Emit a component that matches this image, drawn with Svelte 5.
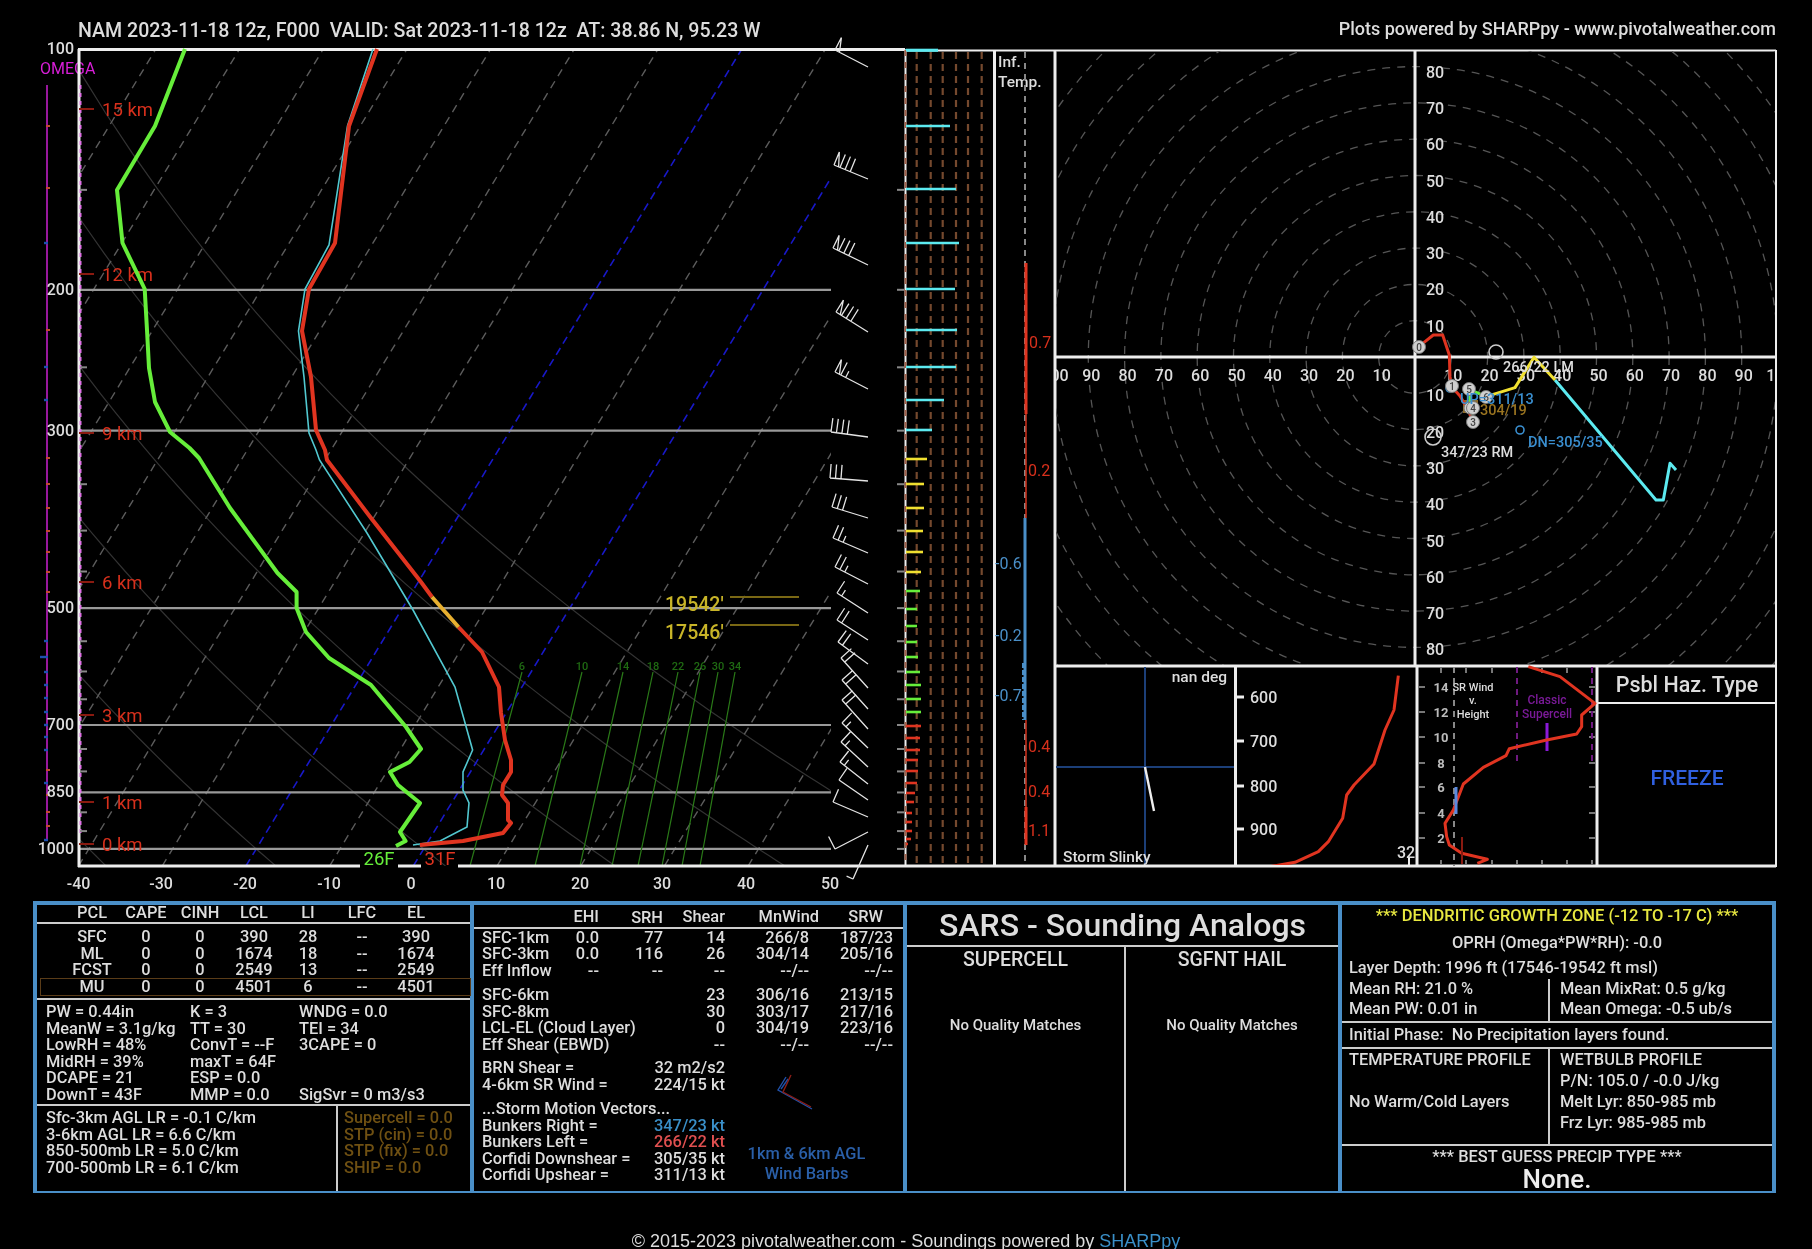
<script lang="ts">
  // pressure axis of the skew-T, fitted on the 100 and 1000 mb lines
  const py = (p) => 49 + 347.4 * Math.log(p / 100);
  const tx = (t, y) => 78.5 + 8.37 * (t + 40) + 0.607 * (866 - y);

  const toPath = (pts) => 'M' + pts.map((p) => p.join(' ')).join('L');
  const zoomed = (pts, ox, oy, sx = 3, sy = 3) => pts.map(([x, y]) => [ox + x / sx, oy + y / sy]);

  const isoTemps = [];
  for (let t = -110; t <= 40; t += 10) isoTemps.push(t);

  function adiabat(thetaC) {
    const pts = [];
    for (let p = 90; p <= 1060; p += 15) {
      const y = py(p);
      const t = (thetaC + 273.15) * Math.pow(p / 1000, 0.286) - 273.15;
      pts.push([tx(t, y).toFixed(1), y.toFixed(1)]);
    }
    return toPath(pts);
  }
  const adiabats = [-40, -20, 0, 20, 40, 60].map(adiabat);

  const isobars = [200, 300, 500, 700, 850, 1000];
  const pLabels = [100, 200, 300, 500, 700, 850, 1000];
  const minor = [150, 250, 350, 400, 450, 550, 600, 650, 750, 800, 900, 950];
  const heights = [
    ['15 km', 109], ['12 km', 274], ['9 km', 433], ['6 km', 582], ['3 km', 715], ['1 km', 802], ['0 km', 844]
  ];
  const xLabels = [[-40, 78.5], [-30, 161], [-20, 245], [-10, 329], [0, 411], [10, 496], [20, 580], [30, 662], [40, 746], [50, 830]];

  const mixing = [
    [6, 522, 470], [10, 582, 535], [14, 623, 580], [18, 653, 612],
    [22, 678, 638], [26, 700, 662], [30, 718, 682], [34, 735, 700]
  ];

  const tempA = [[377,49],[349,126],[335,243],[309,289],[302,331],[311,377],[316,430],[325,450],[327,460],[371,518],[421,582],[432,597]];
  const tempB = [[458.5,627],[482,652],[499,687],[501,713],[505,740],[511,760],[511,772],[503,785],[502,795],[508,803],[508,820],[511,823],[503,833],[463,841],[420,845]];
  const wetbulb = [[373,49],[347.5,126],[329,245],[305,289],[298.5,331],[304,377],[309,433],[316,450],[319.5,460],[367,533],[413,610],[455,687],[472.6,750],[463,772],[463,790],[469,803],[467,827],[440,841],[413,845]];
  const dew = [[185,49],[155,126],[117,190],[122.5,243],[144.7,289],[147,330],[149,368],[155,402],[170,432],[189.5,448],[199,458],[230,508],[277.5,573],[296.6,592],[296.6,608],[306,632],[329,658],[371,685],[406,727],[421,749],[409.5,762],[390,772],[398,785],[420,803],[400,832],[405.6,841],[396,846]];

  const omegaRed = [126,188,330,458,484,508,531,552,572,592,770,795,812,826];
  const omegaBlue = [243,367,400,641,657,672,685,698,712,725,737,750,783,840];

  function barb(tipX, tipY, tailY, count, flags) {
    const tailX = 868;
    const len = Math.hypot(tailX - tipX, tailY - tipY);
    const ux = (tailX - tipX) / len, uy = (tailY - tipY) / len;
    const nx = uy, ny = -ux;
    let d = `M${tailX} ${tailY}L${tipX} ${tipY}`;
    let s = 0;
    const at = (v) => [tipX + ux * v, tipY + uy * v];
    for (let i = 0; i < flags; i++) {
      const [ax, ay] = at(s), [bx, by] = at(s + 5);
      d += `M${ax} ${ay}L${ax + nx * 14} ${ay + ny * 14}L${bx} ${by}`;
      s += 6.5;
    }
    let left = count;
    while (left > 0) {
      const l = left >= 1 ? 14 : 7;
      const [ax, ay] = at(s);
      d += `M${ax} ${ay}l${nx * l} ${ny * l}`;
      left -= 1;
      s += 5.5;
    }
    return d;
  }
  const barbs = [
    [835,50,67,0,1],[834,165,179,3,1],[833,248,265,3,1],[836,312,332,3,1],[835,372,389,1.5,1],
    [831,432,437,4,0],[830,478,481,3,0],[832,507,518,3,0],[833,538,553,2.5,0],[835,567,584,2.5,0],
    [837,593,613,1.5,0],[837,620,640,2,0],[838,642,664,2,0],[841,658,688,2,0],[842,680,709,2,0],
    [842,700,729,2,0],[842,723,748,1.5,0],[841,742,767,1.5,0],[840,762,784,1.5,0],[839,780,800,1,0],
    [833,802,817,1,0],[835,849,832,1,0],[853,879,845,0.5,0]
  ].map((b) => barb(...b));

  const brown = [916.7, 930.7, 942.7, 956, 968, 981.7];
  const bars = [
    ['cy',50,938],['cy',126,950],['cy',189,956],['cy',243,959],['cy',289,955],['cy',330,957],['cy',367,956],['cy',400,944],['cy',430,932],
    ['ye',459,927],['ye',484,924],['ye',508,924],['ye',531,923],['ye',552,923],['ye',572,921],
    ['gr',591,920],['gr',609,917],['gr',626,917],['gr',642,917],['gr',657,918],['gr',672,920],['gr',685,921],['gr',699,921],['gr',712,921],
    ['re',726,921],['re',738,920],['re',750,920],['re',760,918],['re',771,918],['re',783,917],['re',793,915],['re',802,914],['re',813,912],['re',822,912],['re',831,912],['re',839,911],['re',844,908]
  ];
  const infLabels = [
    ['red',1029,342,'0.7'],['red',1028,470,'0.2'],['blue',995,563,'-0.6'],['blue',995,635,'-0.2'],
    ['blue',995,695,'-0.7'],['red',1028,746,'0.4'],['red',1028,791,'0.4'],['red',1028,830,'1.1']
  ];

  const rings = [1,2,3,4,5,6,7,8,9,10,11,12,13];
  const hodoX = [100,90,80,70,60,50,40,30,20,10];
  const hodoUp = [10,20,30,40,50,60,70,80];
  const hRed = zoomed([[118,80],[135,65],[160,45],[188,45],[208,105],[210,170],[215,200],[240,228],[265,270],[278,305]], 1380, 320);
  const hGreen = zoomed([[278,305],[270,240],[268,208],[318,230]], 1380, 320);
  const hYellow = zoomed([[318,230],[405,203],[462,112],[525,180]], 1380, 320);
  const hCyan = zoomed([[525,180],[828,540],[850,540],[870,430],[888,450]], 1380, 320);
  const hDots = [['0',1419,347],['1',1452,386],['3',1473,422],['4',1473,408],['5',1469,389],['6',1486,397]];

  const slinkyRed = zoomed([[1045,47],[1032,150],[1005,210],[972,312],[912,375],[890,405],[878,475],[835,545],[805,575],[735,607],[660,620]], 1050, 660);
  const srRed = zoomed([[385,20],[480,50],[585,130],[545,165],[545,200],[530,222],[440,240],[328,266],[318,287],[250,322],[190,372],[160,450],[135,490],[140,530],[148,555],[185,580],[262,598],[232,610]], 1400, 660);
  const srTicksX = [1441,1466,1492,1517,1542,1567,1592];
  const srTicksY = [['14',687],['12',712],['10',737],['8',763],['6',787],['4',813],['2',838]];

  const parcels = [
    ['SFC','0','0','390','28','--','390'],
    ['ML','0','0','1674','18','--','1674'],
    ['FCST','0','0','2549','13','--','2549']
  ];
  const indices = [
    ['PW = 0.44in','K = 3','WNDG = 0.0'],
    ['MeanW = 3.1g/kg','TT = 30','TEI = 34'],
    ['LowRH = 48%','ConvT = --F','3CAPE = 0'],
    ['MidRH = 39%','maxT = 64F',''],
    ['DCAPE = 21','ESP = 0.0',''],
    ['DownT = 43F','MMP = 0.0','SigSvr = 0 m3/s3']
  ];
  const shearA = [
    ['SFC-1km','0.0','77','14','266/8','187/23'],
    ['SFC-3km','0.0','116','26','304/14','205/16'],
    ['Eff Inflow','--','--','--','--/--','--/--']
  ];
  const shearB = [
    ['SFC-6km','','','23','306/16','213/15'],
    ['SFC-8km','','','30','303/17','217/16'],
    ['LCL-EL (Cloud Layer)','','','0','304/19','223/16'],
    ['Eff Shear (EBWD)','','','--','--/--','--/--']
  ];
</script>

<div class="page">
  <header class="title">
    <span>NAM 2023-11-18 12z, F000&nbsp; VALID: Sat 2023-11-18 12z&nbsp; AT: 38.86 N, 95.23 W</span>
    <span class="credit">Plots powered by SHARPpy - www.pivotalweather.com</span>
  </header>

  <svg class="plots" viewBox="0 36 1812 864" width="1812" height="864">
    <defs>
      <clipPath id="skew"><rect x="79" y="50" width="752" height="816" /></clipPath>
      <clipPath id="hodo"><rect x="1056" y="51" width="720" height="615" /></clipPath>
      <clipPath id="p2"><rect x="1237" y="667" width="179" height="198" /></clipPath>
    </defs>

    <!-- skew-T background -->
    <g clip-path="url(#skew)">
      {#each adiabats as d}
        <path {d} class="adiabat" />
      {/each}
      {#each isoTemps as t}
        <line x1={tx(t, 866)} y1="866" x2={tx(t, 49)} y2="49" class={t === -20 || t === 0 ? 'iso-blue' : 'iso'} />
      {/each}
      {#each isobars as p}
        <line x1="79" x2="831" y1={py(p)} y2={py(p)} class="isobar" />
      {/each}
      {#each mixing as [w, top, bottom]}
        <line x1={bottom} y1="866" x2={top} y2="672" class="mix" />
        <text x={top} y="670" class="mix-label">{w}</text>
      {/each}
    </g>

    <!-- omega -->
    <line x1="47" x2="47" y1="85" y2="840" class="omega" />
    {#each omegaRed as y}
      <line x1="46" x2="50" y1={y} y2={y} class="omega-red" />
    {/each}
    {#each omegaBlue as y, i}
      <line x1={i === 4 ? 40 : 44} x2="48" y1={y} y2={y} class="omega-blue" />
    {/each}
    <text x="40" y="74" class="omega-label">OMEGA</text>

    <line x1="79" x2="79" y1="49" y2="867" class="frame" />
    <line x1="80.5" x2="80.5" y1="85" y2="835" class="pink" />
    <line x1="78" x2="905" y1="49.5" y2="49.5" class="frame" />
    <line x1="905" x2="1776" y1="50.5" y2="50.5" class="frame thin" />
    <line x1="938" x2="905" y1="50.5" y2="50.5" class="bar-cy" />
    <line x1="78" x2="360" y1="866" y2="866" class="frame" />
    <line x1="398" x2="421" y1="866" y2="866" class="frame" />
    <line x1="458" x2="1776" y1="866" y2="866" class="frame" />

    {#each minor as p}
      <line x1="80" x2="87" y1={py(p)} y2={py(p)} class="tick" />
    {/each}
    {#each [...minor, 200, 300, 500, 700, 850, 1000] as p}
      <line x1="897" x2="904" y1={py(p)} y2={py(p)} class="tick" />
    {/each}

    {#each pLabels as p}
      <text x="74" y={py(p) + 5} class="axis end">{p}</text>
    {/each}
    {#each xLabels as [t, x]}
      <text {x} y="889" class="axis mid">{t}</text>
    {/each}
    {#each heights as [label, y]}
      <line x1="79" x2="94" y1={y} y2={y} class="km-tick" />
      <text x="102" y={y + 6.5} class="km">{label}</text>
    {/each}

    <!-- profile traces -->
    <path d={toPath(dew)} class="trace green" />
    <path d={toPath(wetbulb)} class="wet" />
    <path d={toPath(tempA)} class="trace red" />
    <path d={toPath(tempB)} class="trace red" />
    <path d="M432 597L458.5 627" class="trace amber" />

    <text x="379" y="865" class="sfc mid green-t">26F</text>
    <text x="440" y="865" class="sfc mid red-t">31F</text>

    <text x="665" y="611" class="dgz">19542'</text>
    <text x="665" y="639" class="dgz">17546'</text>
    <line x1="730" x2="799" y1="597" y2="597" class="dgz-line" />
    <line x1="730" x2="799" y1="625" y2="625" class="dgz-line" />

    {#each barbs as d}
      <path {d} class="barb" />
    {/each}

    <!-- wind speed column -->
    <line x1="905.5" x2="905.5" y1="50" y2="866" class="frame thin" />
    <line x1="905.5" x2="905.5" y1="50" y2="866" class="axis-dash" />
    {#each brown as x}
      <line x1={x} x2={x} y1="52" y2="866" class="brown" />
    {/each}
    {#each bars as [kind, y, end]}
      <line x1="906" x2={end} y1={y} y2={y} class="bar-{kind}" />
    {/each}

    <!-- inferred temp column -->
    <line x1="994.5" x2="994.5" y1="50" y2="866" class="frame" />
    <line x1="1055" x2="1055" y1="50" y2="866" class="frame" />
    <text x="998" y="67" class="small">Inf.</text>
    <text x="998" y="87" class="small">Temp.</text>
    <line x1="1025" x2="1025" y1="52" y2="866" class="inf-dash" />
    <line x1="1026" x2="1026" y1="263" y2="414" class="inf-red" />
    <line x1="1026" x2="1026" y1="414" y2="518" class="inf-red-thin" />
    <line x1="1026" x2="1026" y1="720" y2="807" class="inf-red-thin" />
    <line x1="1026" x2="1026" y1="807" y2="845" class="inf-red" />
    <line x1="1025" x2="1025" y1="518" y2="720" class="inf-blue" />
    <line x1="1023" x2="1023" y1="663" y2="720" class="inf-blue-dash" />
    {#each infLabels as [cls, x, y, label]}
      <text {x} y={y + 6} class="inf-label {cls}">{label}</text>
    {/each}

    <!-- hodograph -->
    <g clip-path="url(#hodo)">
      {#each rings as n}
        <circle cx="1415" cy="357" r={n * 36.3} class="ring" />
      {/each}
      <line x1="1056" x2="1776" y1="357" y2="357" class="frame" />
      <line x1="1415" x2="1415" y1="50" y2="666" class="frame" />
      {#each hodoX as n}
        <text x={1418 - n * 3.63} y="381" class="axis mid">{n}</text>
        <text x={1417 + n * 3.63} y="381" class="axis mid">{n}</text>
      {/each}
      {#each hodoUp as n}
        <text x="1435" y={362 - n * 3.63 + 6} class="axis mid">{n}</text>
        <text x="1435" y={362 + n * 3.63 + 3} class="axis mid">{n}</text>
      {/each}

      <rect x="1463" y="400" width="15" height="13" class="mean-box" />
      <circle cx="1450" cy="388" r="4" class="open-blue" />
      <path d={toPath(hCyan)} class="hodo cyan" />
      <path d={toPath(hYellow)} class="hodo yellow" />
      <path d={toPath(hGreen)} class="hodo lime" />
      <path d={toPath(hRed)} class="hodo crimson" />
      <circle cx="1470" cy="408" r="6" class="dot" />
      {#each hDots as [label, x, y]}
        <circle cx={x} cy={y} r="6.5" class="dot" />
        <text {x} y={y + 3.5} class="dot-label">{label}</text>
      {/each}
      <circle cx="1496" cy="352" r="7" class="open" />
      <circle cx="1433" cy="437" r="8" class="open" />
      <circle cx="1520" cy="430" r="4" class="open-blue" />
      <text x="1503" y="372" class="hodo-text">266/22 LM</text>
      <text x="1441" y="457" class="hodo-text">347/23 RM</text>
      <text x="1528" y="447" class="hodo-text blue-t">DN=305/35</text>
      <text x="1460" y="404" class="hodo-text blue-t">UP=311/13</text>
      <text x="1480" y="415" class="hodo-text gold-t">304/19</text>
    </g>

    <line x1="1055" x2="1776" y1="666" y2="666" class="frame" />
    <line x1="1776" x2="1776" y1="50" y2="867" class="frame thin" />

    <!-- storm slinky -->
    <line x1="1145" x2="1145" y1="667" y2="865" class="cross" />
    <line x1="1056" x2="1235" y1="767" y2="767" class="cross" />
    <line x1="1145" x2="1154" y1="767" y2="811" class="slinky" />
    <text x="1227" y="682" class="small end">nan deg</text>
    <text x="1063" y="862" class="small">Storm Slinky</text>

    <!-- theta-e -->
    <line x1="1235.5" x2="1235.5" y1="666" y2="866" class="frame" />
    {#each [[600,697],[700,741],[800,786],[900,829]] as [p, y]}
      <line x1="1236" x2="1244" y1={y} y2={y} class="frame" />
      <text x="1250" y={y + 6} class="axis">{p}</text>
    {/each}
    <g clip-path="url(#p2)">
      <path d={toPath(slinkyRed)} class="hodo crimson" />
      <text x="1397" y="858" class="axis">320</text>
    </g>
    <line x1="1409" x2="1409" y1="858" y2="866" class="frame thin" />

    <!-- SR wind -->
    <line x1="1417" x2="1417" y1="666" y2="866" class="frame" />
    <line x1="1597" x2="1597" y1="666" y2="866" class="frame" />
    {#each srTicksX as x}
      <line x1={x} x2={x} y1="667" y2="673" class="sr-tick" />
      <line x1={x} x2={x} y1="860" y2="865" class="sr-tick" />
    {/each}
    {#each srTicksY as [label, y]}
      <line x1="1418" x2="1425" y1={y} y2={y} class="sr-tick" />
      <line x1="1589" x2="1596" y1={y} y2={y} class="sr-tick" />
      <text x="1441" y={y + 4.5} class="sr-num">{label}</text>
    {/each}
    <line x1="1454" x2="1454" y1="667" y2="866" class="inf-dash" />
    <line x1="1517" x2="1517" y1="667" y2="763" class="purple-dash" />
    <line x1="1592" x2="1592" y1="667" y2="763" class="purple-dash" />
    <text x="1473" y="691" class="sr-text tight">SR Wind</text>
    <text x="1473" y="704" class="sr-text tight">v.</text>
    <text x="1473" y="718" class="sr-text tight">Height</text>
    <text x="1547" y="704" class="sr-text purple-t">Classic</text>
    <text x="1547" y="718" class="sr-text purple-t">Supercell</text>
    <line x1="1547" x2="1547" y1="723" y2="751" class="sr-purple" />
    <path d={toPath(srRed)} class="hodo crimson" />
    <line x1="1456" x2="1456" y1="787" y2="814" class="sr-blue" />
    <line x1="1462" x2="1462" y1="837" y2="864" class="sr-dark" />

    <!-- hazard type -->
    <text x="1687" y="692" class="haz-title">Psbl Haz. Type</text>
    <line x1="1598" x2="1776" y1="703" y2="703" class="frame thin" />
    <text x="1687" y="785" class="haz">FREEZE</text>
  </svg>

  <section class="panel">
    <div class="cell col1">
      <div class="pcl head">
        {#each ['PCL','CAPE','CINH','LCL','LI','LFC','EL'] as h}<span>{h}</span>{/each}
      </div>
      <div class="pcl-body">
        {#each parcels as row}
          <div class="pcl">{#each row as v}<span>{v}</span>{/each}</div>
        {/each}
        <div class="pcl mu">{#each ['MU','0','0','4501','6','--','4501'] as v}<span>{v}</span>{/each}</div>
      </div>
      <div class="indices">
        {#each indices as row}
          {#each row as v}<span>{v}</span>{/each}
        {/each}
      </div>
      <div class="lapse">
        <div class="rates">
          <div>Sfc-3km AGL LR = -0.1 C/km</div>
          <div>3-6km AGL LR = 6.6 C/km</div>
          <div>850-500mb LR = 5.0 C/km</div>
          <div>700-500mb LR = 6.1 C/km</div>
        </div>
        <div class="severe">
          <div>Supercell = 0.0</div>
          <div>STP (cin) = 0.0</div>
          <div>STP (fix) = 0.0</div>
          <div>SHIP = 0.0</div>
        </div>
      </div>
    </div>

    <div class="cell col2">
      <div class="shear-head">
        <span></span><span>EHI</span><span class="srh">SRH</span><span>Shear</span><span>MnWind</span><span>SRW</span>
      </div>
      <div class="shear-group first">
        {#each shearA as row}
          <div class="shear">{#each row as v}<span>{v}</span>{/each}</div>
        {/each}
      </div>
      <div class="shear-group">
        {#each shearB as row}
          <div class="shear">{#each row as v}<span>{v}</span>{/each}</div>
        {/each}
      </div>
      <div class="lower">
        <div class="lower-left">
          <div class="kv"><span>BRN Shear =</span><span>32 m2/s2</span></div>
          <div class="kv"><span>4-6km SR Wind =</span><span>224/15 kt</span></div>
          <div class="vectors">...Storm Motion Vectors...</div>
          <div class="kv"><span>Bunkers Right =</span><span class="rm">347/23 kt</span></div>
          <div class="kv"><span>Bunkers Left =</span><span class="lm">266/22 kt</span></div>
          <div class="kv"><span>Corfidi Downshear =</span><span>305/35 kt</span></div>
          <div class="kv"><span>Corfidi Upshear =</span><span>311/13 kt</span></div>
        </div>
        <div class="lower-right">
          <svg class="mini" viewBox="0 0 50 40" width="50" height="40">
            <path d="M42 36L8 17L16 4" class="mini-blue" />
            <path d="M11 16L18 6" class="mini-blue" />
            <path d="M41 34L13 19L21 2" class="mini-red" />
          </svg>
          <div class="caption">1km &amp; 6km AGL</div>
          <div class="caption">Wind Barbs</div>
        </div>
      </div>
    </div>

    <div class="cell col3">
      <h2>SARS - Sounding Analogs</h2>
      <div class="sars">
        <div class="sars-col">
          <h3>SUPERCELL</h3>
          <p>No Quality Matches</p>
        </div>
        <div class="sars-col">
          <h3>SGFNT HAIL</h3>
          <p>No Quality Matches</p>
        </div>
      </div>
    </div>

    <div class="cell col4">
      <div class="dgz-title">*** DENDRITIC GROWTH ZONE (-12 TO -17 C) ***</div>
      <div class="oprh">OPRH (Omega*PW*RH): -0.0</div>
      <div class="depth">Layer Depth: 1996 ft (17546-19542 ft msl)</div>
      <div class="split means">
        <div><div>Mean RH: 21.0 %</div><div>Mean PW: 0.01 in</div></div>
        <div><div>Mean MixRat: 0.5 g/kg</div><div>Mean Omega: -0.5 ub/s</div></div>
      </div>
      <div class="phase">Initial Phase:&nbsp; No Precipitation layers found.</div>
      <div class="split profiles">
        <div>
          <div>TEMPERATURE PROFILE</div>
          <div class="blank"></div>
          <div>No Warm/Cold Layers</div>
        </div>
        <div>
          <div>WETBULB PROFILE</div>
          <div>P/N: 105.0 / -0.0 J/kg</div>
          <div>Melt Lyr: 850-985 mb</div>
          <div>Frz Lyr: 985-985 mb</div>
        </div>
      </div>
      <div class="guess">
        <div>*** BEST GUESS PRECIP TYPE ***</div>
        <div class="none">None.</div>
      </div>
    </div>
  </section>

  <footer>© 2015-2023 pivotalweather.com - Soundings powered by <span class="link">SHARPpy</span></footer>
</div>

<style>
  :global(body) {
    margin: 0;
    background: #000;
    overflow: hidden;
  }

  .page {
    width: 1812px;
    height: 1249px;
    overflow: hidden;
    background: #000;
    color: #ddd;
    font-family: Roboto, "Liberation Sans", sans-serif;
    filter: blur(0.45px);
  }

  .title {
    height: 36px;
    box-sizing: border-box;
    padding: 20px 36px 0 78px;
    display: flex;
    justify-content: space-between;
    font-size: 19.6px;
    font-weight: 500;
    line-height: 22px;
    white-space: nowrap;
  }
  .credit {
    font-size: 18px;
    margin-top: -2px;
  }

  .plots {
    display: block;
  }
  .plots text {
    font-family: Roboto, "Liberation Sans", sans-serif;
    fill: #ddd;
    font-weight: 500;
  }
  .plots line,
  .plots path,
  .plots circle {
    fill: none;
  }

  .adiabat { stroke: #333; stroke-width: 1.2; }
  .iso { stroke: #5c5c5c; stroke-width: 1.4; stroke-dasharray: 8 6; }
  .iso-blue { stroke: #1818c8; stroke-width: 1.6; stroke-dasharray: 8 5; }
  .isobar { stroke: #999; stroke-width: 2.2; }
  .mix { stroke: #2a7a18; stroke-width: 1.2; }
  .plots .mix-label { fill: #1f6a12; font-size: 11px; text-anchor: middle; }

  .frame { stroke: #eee; stroke-width: 3; }
  .frame.thin { stroke-width: 2; }
  .tick { stroke: #888; stroke-width: 2; }
  .pink { stroke: #e070e8; stroke-width: 2; stroke-dasharray: 4 4; }
  .omega { stroke: #98189c; stroke-width: 2; }
  .omega-red { stroke: #c04a30; stroke-width: 2; }
  .omega-blue { stroke: #1e50b0; stroke-width: 2.4; }
  .plots .omega-label { fill: #d81ed8; font-size: 16px; font-weight: 400; }

  .plots .axis { font-size: 16px; }
  .plots .end { text-anchor: end; }
  .plots .mid { text-anchor: middle; }

  .km-tick { stroke: #8a1a10; stroke-width: 2; }
  .plots .km { fill: #d8301c; font-size: 18.5px; font-weight: 400; }

  .trace { fill: none; stroke-width: 4; stroke-linejoin: round; }
  .plots .green { stroke: #66ee3a; }
  .plots .red { stroke: #e03420; }
  .plots .amber { stroke: #e8b030; }
  .plots .wet { stroke: #52c8d0; stroke-width: 1.6; }

  .plots .sfc { font-size: 18.5px; font-weight: 400; }
  .plots .green-t { fill: #66ee3a; }
  .plots .red-t { fill: #e03420; }

  .plots .dgz { fill: #c8b428; font-size: 19.5px; }
  .dgz-line { stroke: #7a6814; stroke-width: 2; }
  .plots .barb { stroke: #e4e4e4; stroke-width: 1.3; }

  .axis-dash { stroke: #a0604a; stroke-width: 2; stroke-dasharray: 6 6; }
  .brown { stroke: #75492e; stroke-width: 2.2; stroke-dasharray: 7 5; }
  .bar-cy { stroke: #5ceaf0; stroke-width: 2.6; }
  .bar-ye { stroke: #f0e030; stroke-width: 2.6; }
  .bar-gr { stroke: #66ee3a; stroke-width: 2.6; }
  .bar-re { stroke: #e03420; stroke-width: 2.6; }

  .plots .small { font-size: 15.5px; }
  .inf-dash { stroke: #888; stroke-width: 2; stroke-dasharray: 6 5; }
  .inf-red { stroke: #e03420; stroke-width: 3; }
  .inf-red-thin { stroke: #c8301c; stroke-width: 1.6; }
  .inf-blue { stroke: #4a8fc8; stroke-width: 3; }
  .inf-blue-dash { stroke: #4a8fc8; stroke-width: 2; stroke-dasharray: 5 2; }
  .plots .inf-label { font-size: 16px; font-weight: 400; }
  .plots .inf-label.red { fill: #d8301c; stroke: none; }
  .plots .inf-label.blue { fill: #4a8fc8; }

  .ring { stroke: #555; stroke-width: 1.3; stroke-dasharray: 8 7; }
  .hodo { fill: none; stroke-width: 3; stroke-linejoin: round; }
  .plots .cyan { stroke: #5ceaf0; }
  .plots .yellow { stroke: #f0e030; }
  .plots .lime { stroke: #66ee3a; }
  .plots .crimson { stroke: #e03420; }
  .plots .mean-box { fill: #8f6c28; }
  .plots .dot { fill: #cfcfcf; stroke: #777; stroke-width: 1; }
  .plots .dot-label { fill: #444; font-size: 10px; text-anchor: middle; }
  .open { stroke: #ccc; stroke-width: 1.6; }
  .open-blue { stroke: #3a8fd0; stroke-width: 1.6; }
  .plots .hodo-text { font-size: 14.5px; }
  .plots .blue-t { fill: #3a8fd0; }
  .plots .gold-t { fill: #9a7420; }

  .cross { stroke: #1c3f78; stroke-width: 2; }
  .slinky { stroke: #eee; stroke-width: 2.4; }

  .sr-tick { stroke: #777; stroke-width: 2; }
  .plots .sr-num { font-size: 13px; font-weight: 700; fill: #bbb; text-anchor: middle; }
  .plots .sr-text { font-size: 12px; text-anchor: middle; }
  .plots .sr-text.tight { font-size: 11px; }
  .plots .purple-t { fill: #7a1a98; }
  .purple-dash { stroke: #6f1a80; stroke-width: 2; stroke-dasharray: 6 5; }
  .sr-purple { stroke: #8a1ad8; stroke-width: 3; }
  .sr-blue { stroke: #5a8ae0; stroke-width: 3; }
  .sr-dark { stroke: #8a1a10; stroke-width: 2; }

  .plots .haz-title { font-size: 21.5px; font-weight: 500; text-anchor: middle; }
  .plots .haz { fill: #3060e0; font-size: 21px; font-weight: 500; text-anchor: middle; }

  /* bottom tables */
  .panel {
    width: 1743px;
    height: 292px;
    box-sizing: border-box;
    margin: 1px 0 0 33px;
    border: 4px solid #4a8fc8;
    background: #4a8fc8;
    display: grid;
    grid-template-columns: 433px 429px 431px 430px;
    gap: 4px;
    font-size: 16.4px;
    line-height: 16.5px;
    font-weight: 500;
  }
  .cell {
    background: #000;
    display: flex;
    flex-direction: column;
    min-width: 0;
    white-space: nowrap;
  }

  .pcl {
    display: grid;
    grid-template-columns: repeat(7, 54px);
    padding-left: 28px;
    text-align: center;
  }
  .pcl.head {
    padding-top: 0;
    height: 17px;
    border-bottom: 2px solid #ccc;
    box-sizing: content-box;
  }
  .pcl-body {
    padding: 5px 0 3px;
    border-bottom: 2px solid #ccc;
  }
  .mu {
    margin-left: 4px;
    padding-left: 24px;
    outline: 1px solid #5a3c18;
  }
  .indices {
    display: grid;
    grid-template-columns: 144px 109px 1fr;
    padding: 4px 0 1px 9px;
    border-bottom: 2px solid #ccc;
    height: 99px;
  }
  .lapse {
    flex: 1;
    display: flex;
  }
  .rates {
    width: 290px;
    padding: 4px 0 0 9px;
  }
  .severe {
    flex: 1;
    border-left: 2px solid #ccc;
    padding: 4px 0 0 6px;
    color: #6f5012;
  }

  .shear-head,
  .shear {
    display: grid;
    padding-left: 8px;
    text-align: right;
  }
  .shear {
    grid-template-columns: 67px 50px 64px 62px 84px 84px;
  }
  .shear span:first-child {
    text-align: left;
  }
  .shear-head {
    grid-template-columns: 67px 50px 64px 62px 94px 64px;
    padding-top: 4px;
    padding-bottom: 1px;
    border-bottom: 2px solid #ccc;
  }
  .srh {
    position: relative;
    top: 1px;
  }
  .shear-group {
    margin-top: 8px;
  }
  .shear-group.first {
    margin-top: 1px;
  }
  .lower {
    display: flex;
    margin-top: 7px;
  }
  .lower-left {
    width: 243px;
    padding-left: 8px;
  }
  .kv {
    display: flex;
    justify-content: space-between;
  }
  .vectors {
    margin-top: 8px;
  }
  .rm { color: #3a8fc8; }
  .lm { color: #e05050; }
  .lower-right {
    flex: 1;
    display: flex;
    flex-direction: column;
    align-items: center;
    padding-right: 15px;
  }
  .mini {
    margin: 13px 0 0 -24px;
    flex: none;
  }
  .mini-blue { fill: none; stroke: #2050a8; stroke-width: 1.4; }
  .mini-red { fill: none; stroke: #8a1e18; stroke-width: 1.4; }
  .caption {
    color: #2a5fa8;
    line-height: 20px;
  }
  .mini + .caption {
    margin-top: 31px;
  }

  h2 {
    margin: 0;
    height: 40px;
    font-size: 32px;
    font-weight: 500;
    line-height: 40px;
    text-align: center;
    border-bottom: 2px solid #ccc;
  }
  .sars {
    flex: 1;
    display: flex;
  }
  .sars-col {
    flex: 1;
    text-align: center;
  }
  .sars-col:first-child {
    flex: none;
    width: 217px;
  }
  .sars-col + .sars-col {
    border-left: 2px solid #ccc;
  }
  h3 {
    margin: 4px 0 0;
    font-size: 19.5px;
    font-weight: 500;
    line-height: 18px;
  }
  .sars-col p {
    margin: 48px 0 0;
    font-size: 15px;
  }

  .col4 {
    line-height: 20px;
  }
  .dgz-title {
    color: #e8e840;
    text-align: center;
    font-size: 16.5px;
    margin-top: 1px;
  }
  .oprh {
    text-align: center;
    margin-top: 7px;
  }
  .depth {
    padding-left: 7px;
    margin-top: 5px;
    height: 21px;
    line-height: 20px;
  }
  .split {
    display: flex;
  }
  .split > div:first-child {
    width: 208px;
    box-sizing: border-box;
    padding-left: 7px;
    border-right: 2px solid #ccc;
  }
  .split > div:last-child {
    padding-left: 10px;
  }
  .means {
    padding-bottom: 0;
    height: 42px;
    border-bottom: 2px solid #ccc;
  }
  .phase {
    padding: 2px 0 2px 7px;
    border-bottom: 2px solid #ccc;
  }
  .profiles {
    height: 95px;
    line-height: 21px;
    border-bottom: 2px solid #ccc;
  }
  .blank {
    height: 21px;
  }
  .guess {
    text-align: center;
    padding-top: 1px;
  }
  .none {
    font-size: 26px;
    line-height: 24px;
    color: #eee;
  }

  footer {
    margin-top: 41px;
    text-align: center;
    font-family: "Liberation Sans", Arial, sans-serif;
    font-size: 18px;
    line-height: 15px;
  }
  .link {
    color: #3a8fc8;
  }
</style>
